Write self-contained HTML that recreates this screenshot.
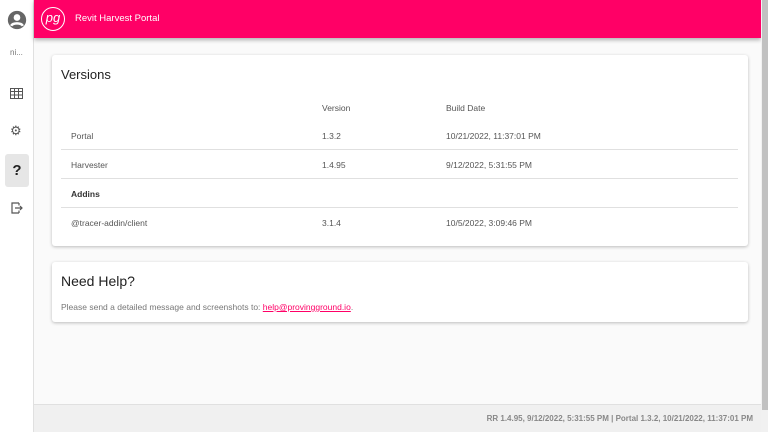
<!DOCTYPE html>
<html><head><style>
*{margin:0;padding:0;box-sizing:border-box}
body{width:768px;height:432px;overflow:hidden;background:#fafafa;font-family:"Liberation Sans",sans-serif;position:relative;color:#333}
#side{position:absolute;left:0;top:0;width:34px;height:432px;background:#fff;border-right:1px solid #e0e0e0}
#hdr{position:absolute;left:34px;top:0;width:727px;height:38px;background:#ff0066;box-shadow:0 2px 4px rgba(0,0,0,.3);color:#fff}
.card{position:absolute;left:52px;width:696px;background:#fff;border-radius:3px;box-shadow:0 1px 3px rgba(0,0,0,.25)}
.row{position:absolute;left:9px;width:677px;height:29px;border-bottom:1px solid #e0e0e0;font-size:8.5px;color:#555}
.row span{position:absolute;top:10px}
#foot{position:absolute;left:34px;top:404px;width:727px;height:28px;background:#f0f0f0;border-top:1px solid #e0e0e0;font-size:8px;font-weight:bold;color:#888;text-align:right;padding:9px 8px 0 0}
#sb{position:absolute;left:761px;top:0;width:7px;height:432px;background:#f1f1f1}
#sb div{position:absolute;left:1px;top:0;width:6px;height:410px;background:#c1c1c1}
</style></head><body>
<div id="side">
<svg style="position:absolute;left:7px;top:10px" width="20" height="20" viewBox="0 0 24 24"><circle cx="12" cy="12" r="11" fill="#666"/><circle cx="12" cy="9" r="4" fill="#fff"/><path d="M5 19c2-4 12-4 14 0" stroke="#fff" stroke-width="3" fill="none"/></svg>
<div style="position:absolute;left:10px;top:48px;font-size:8px;color:#777">ni...</div>
<svg style="position:absolute;left:10px;top:88px" width="13" height="11" viewBox="0 0 13 11"><rect x=".5" y=".5" width="12" height="10" fill="none" stroke="#555"/><path d="M0 3.5h13M0 7h13M4.5 0v11M8.5 0v11" stroke="#555"/></svg>
<div style="position:absolute;left:10px;top:123px;font-size:13px;color:#555">⚙</div>
<div style="position:absolute;left:5px;top:154px;width:24px;height:33px;background:#e6e6e6;border-radius:3px;font-size:15px;font-weight:bold;text-align:center;line-height:33px;color:#222">?</div>
<svg style="position:absolute;left:11px;top:202px" width="12" height="12" viewBox="0 0 12 12"><path d="M8 1H1v10h7M8 8.5v2.5M8 1v2.5M4 6h7M9 4l2 2-2 2" stroke="#555" fill="none" stroke-width="1.2"/></svg>
</div>
<div id="hdr">
<div style="position:absolute;left:7px;top:7px;width:24px;height:24px;border:1.5px solid #fff;border-radius:50%;font-style:italic;font-size:13px;text-align:center;line-height:20px">pg</div>
<div style="position:absolute;left:41px;top:13px;font-size:9.5px">Revit Harvest Portal</div>
</div>
<div class="card" style="top:55px;height:191px">
<div style="position:absolute;left:9px;top:12px;font-size:13px;color:#222">Versions</div>
<div style="position:absolute;left:270px;top:48px;font-size:8.5px;color:#555">Version</div>
<div style="position:absolute;left:394px;top:48px;font-size:8.5px;color:#555">Build Date</div>
<div class="row" style="top:66px"><span style="left:10px">Portal</span><span style="left:261px">1.3.2</span><span style="left:385px">10/21/2022, 11:37:01 PM</span></div>
<div class="row" style="top:95px"><span style="left:10px">Harvester</span><span style="left:261px">1.4.95</span><span style="left:385px">9/12/2022, 5:31:55 PM</span></div>
<div class="row" style="top:124px"><span style="left:10px;font-weight:bold;color:#333">Addins</span></div>
<div class="row" style="top:153px;border:none"><span style="left:10px">@tracer-addin/client</span><span style="left:261px">3.1.4</span><span style="left:385px">10/5/2022, 3:09:46 PM</span></div>
</div>
<div class="card" style="top:262px;height:60px">
<div style="position:absolute;left:9px;top:11px;font-size:14px;color:#222">Need Help?</div>
<div style="position:absolute;left:9px;top:40px;font-size:8.5px;color:#777">Please send a detailed message and screenshots to: <span style="color:#ff0066;text-decoration:underline">help@provingground.io</span>.</div>
</div>
<div id="foot">RR 1.4.95, 9/12/2022, 5:31:55 PM | Portal 1.3.2, 10/21/2022, 11:37:01 PM</div>
<div id="sb"><div></div></div>
</body></html>
